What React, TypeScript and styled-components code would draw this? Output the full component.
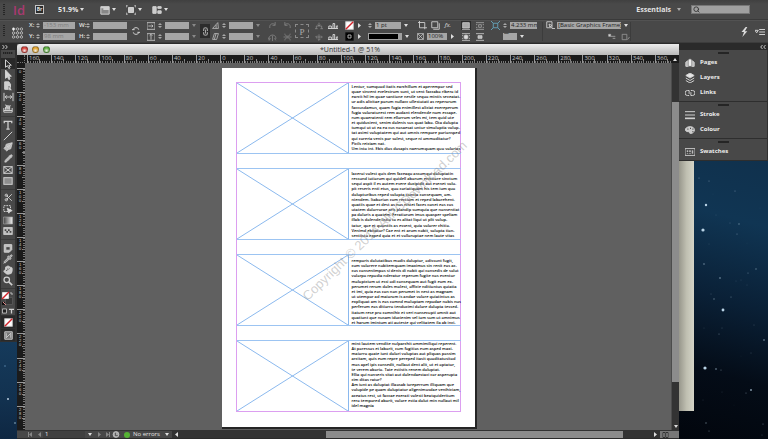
import React from "react";
import styled, { createGlobalStyle, css } from "styled-components";
import { Hand, Link2, PenTool, Pencil, Pipette, Scissors, Search } from "lucide-react";

const Global = createGlobalStyle`
  * { box-sizing: border-box; }
  body { margin: 0; background: #0b2036; overflow: hidden; }
  button, input, select { font: inherit; color: inherit; border: 0; margin: 0; padding: 0; background: none; border-radius: 0; }
  svg { display: block; flex: none; }
`;

const Shell = styled.div`
  min-height: 100vh;
  display: grid;
  grid-template-rows: 20px 23px 1fr;
  font-family: "Open Sans", "Noto Sans", sans-serif;
  font-size: 7px;
  color: #e2e2e2;
`;

const AppBar = styled.header`
  display: flex;
  align-items: center;
  background: linear-gradient(#404040, #494949 4px);
  border-bottom: 1px solid #3a3a3a;
  padding: 0 18px 0 3px;
`;

const Grip = styled.span`
  width: 2px;
  height: 12px;
  background: repeating-linear-gradient(#262626 0 1px, #484848 1px 2px);
`;

const Brand = styled.strong`
  width: 30px;
  padding-left: 8px;
  font: 600 13px/18px "Open Sans", sans-serif;
  color: #a93a70;
`;

const Bridge = styled.button`
  width: 9px;
  height: 9px;
  margin-right: 14px;
  border: 1px solid #c4c4c4;
  background: #2a2a2a;
  font-size: 5px;
  font-weight: 700;
  line-height: 7px;
`;

const ZoomSelect = styled.select`
  appearance: none;
  width: 22px;
  font-weight: 700;
  line-height: 10px;
  color: #e8e8e8;
`;

const ViewButton = styled.button<{ $w?: number }>`
  display: flex;
  align-items: center;
  gap: 2px;
  width: ${(p) => p.$w ?? 26}px;
  height: 12px;
`;

const Workspace = styled.button`
  margin-left: auto;
  display: flex;
  align-items: center;
  gap: 6px;
  font-weight: 700;
  line-height: 10px;
`;

const SearchBox = styled.label`
  display: flex;
  align-items: center;
  width: 59px;
  height: 9px;
  margin-left: 10px;
  padding-left: 1px;
  background: #a0a0a0;
  border: 1px solid #777;
  color: #333;
  input { flex: 1; min-width: 0; height: 7px; }
`;

const ControlBar = styled.div`
  display: flex;
  overflow: hidden;
  background: #484848;
  border-top: 1px solid #525252;
  border-bottom: 1px solid #3c3c3c;
  padding: 1px 3px;
`;

const Group = styled.div<{ $w: number; $single?: boolean; $line?: boolean }>`
  flex: none;
  width: ${(p) => p.$w}px;
  display: grid;
  grid-template-rows: ${(p) => (p.$single ? "18px" : "7px 7px")};
  row-gap: 4px;
  align-items: center;
  ${(p) => p.$line && css`border-left: 1px solid #3c3c3c; padding-left: 2px;`}
`;

const Field = styled.label`
  display: flex;
  align-items: center;
  gap: 3px;
  height: 7px;
  font-size: 6px;
  line-height: 7px;
`;

const Caption = styled.span`
  width: 4px;
  font-weight: 600;
`;

const Value = styled.input<{ $w: number; $dim?: boolean }>`
  width: ${(p) => p.$w}px;
  height: 7px;
  padding-left: 1px;
  background: #a6a6a6;
  color: ${(p) => (p.$dim ? "#7d7d7d" : "#1e1e1e")};
`;

const Choice = styled.select<{ $w: number }>`
  appearance: none;
  width: ${(p) => p.$w}px;
  height: 7px;
  padding-left: 1px;
  background: #a6a6a6;
  color: #1e1e1e;
  line-height: 7px;
`;

const IconButton = styled.button<{ $on?: boolean }>`
  display: grid;
  place-items: center;
  justify-self: start;
  width: 10px;
  height: 9px;
  ${(p) => p.$on && css`background: #2c2c2c;`}
`;

const TallButton = styled(IconButton)`
  height: 14px;
  font: 9px/14px "Liberation Serif", serif;
  color: #aaa;
`;

const DashedButton = styled(TallButton)`
  width: 14px;
  border: 1px dashed #8a8a8a;
`;

const StrokeSample = styled.span`
  width: 34px;
  height: 7px;
  border: 1px solid #a0a0a0;
  border-width: 1px 4px 1px 1px;
  background: #000;
`;

const Spacer = styled.div`
  flex: 1;
`;

const EndButtons = styled.div`
  display: flex;
  align-items: center;
  gap: 6px;
`;

const Desktop = styled.div`
  display: grid;
  grid-template-columns: 17px minmax(0, 1fr) 89px;
  background: #2b2b2b;
`;

const SideColumn = styled.div`
  display: flex;
  flex-direction: column;
  min-height: 0;
`;

const Collapse = styled.button<{ $end?: boolean }>`
  display: flex;
  align-items: center;
  justify-content: ${(p) => (p.$end ? "flex-end" : "flex-start")};
  flex: none;
  height: 7px;
  padding: 0 2px;
  background: #2a2a2a;
`;

const Tools = styled.nav`
  background: #484848;
  border: 1px solid #303030;
  border-width: 0 2px 1px 1px;
  padding-top: 8px;
  background-image: repeating-linear-gradient(90deg, #222 0 1px, #3a3a3a 1px 2px);
  background-size: 10px 2px;
  background-position: 2px 2px;
  background-repeat: no-repeat;
`;

const ToolSet = styled.div<{ $h: number }>`
  height: ${(p) => p.$h}px;
  display: grid;
  grid-auto-rows: 1fr;
  padding-bottom: 2px;
  margin-bottom: 2px;
  border-bottom: 1px solid #3a3a3a;
`;

const Tool = styled.button<{ $on?: boolean }>`
  display: grid;
  place-items: center;
  color: #d0d0d0;
  background: ${(p) => (p.$on ? "#292929" : "transparent")};
`;

const SmallRow = styled.div`
  display: flex;
  align-items: center;
  justify-content: center;
  gap: 2px;
  height: 9px;
`;

const ModeButton = styled(Tool)`
  width: 100%;
  height: 13px;
  border-top: 1px solid #303030;
`;

const LeftSky = styled.div`
  position: relative;
  flex: 1;
  background: linear-gradient(#153a5b, #12314f 60%, #0e2742);
`;

const Window = styled.main`
  display: grid;
  grid-template-rows: 11px 8px minmax(0, 1fr) 8px;
  margin: 1px 0;
  background: #606060;
`;

const TitleBar = styled.div`
  display: grid;
  grid-template-columns: 40px 1fr 40px;
  align-items: center;
  padding-left: 4px;
  border-radius: 3px 0 0 0;
  background: linear-gradient(#ededed, #b9b9b9);
  color: #333;
`;

const Title = styled.h1`
  margin: 0;
  text-align: center;
  font-size: 7px;
  font-weight: 400;
  line-height: 11px;
`;

const Lights = styled.div`
  display: flex;
  gap: 4px;
`;

const Light = styled.button<{ $c: string }>`
  width: 7px;
  height: 7px;
  border-radius: 50%;
  border: 1px solid #0005;
  background: radial-gradient(circle at 50% 75%, #fff9, ${(p) => p.$c} 60%);
`;

const RulerRow = styled.div`
  display: grid;
  grid-template-columns: 10px minmax(0, 1fr) 8px;
  background: #1b1b1b;
`;

const Corner = styled.div`
  width: 8px;
  border-right: 1px dotted #777;
  border-bottom: 1px dotted #777;
`;

const HRuler = styled.div`
  overflow: hidden;
`;

const HScale = styled.div`
  display: grid;
  grid-template-columns: repeat(27, 1fr);
  width: calc(100% + 8px);
  height: 8px;
`;

const HMark = styled.span`
  border-left: 1px solid #999;
  padding-left: 1px;
  font-size: 6px;
  line-height: 6px;
  color: #c4c4c4;
  background:
    repeating-linear-gradient(90deg, #777 0 1px, transparent 1px 10%) 0 100% / 100% 2px no-repeat,
    linear-gradient(#888, #888) 50% 100% / 1px 4px no-repeat;
`;

const Work = styled.div`
  display: grid;
  grid-template-columns: 8px minmax(0, 1fr) 8px;
`;

const VRuler = styled.div`
  display: grid;
  grid-template-rows: repeat(15, 1fr);
  padding-top: 5px;
  background: #1b1b1b;
`;

const VMark = styled.span`
  display: flex;
  flex-direction: column;
  border-top: 1px solid #999;
  padding: 1px 0 0 2px;
  font: 4px/4px "Liberation Sans", sans-serif;
  color: #d0d0d0;
  background:
    repeating-linear-gradient(#777 0 1px, transparent 1px 10%) 100% 0 / 2px 100% no-repeat,
    linear-gradient(#888, #888) 100% 50% / 3px 1px no-repeat;
`;

const Canvas = styled.div`
  position: relative;
  display: flex;
  justify-content: center;
  align-items: flex-start;
  padding: 5px 0 3px;
  overflow: hidden;
  background: #606060;
`;

const Sheet = styled.article`
  width: 253px;
  padding: 14px 14px 15px;
  background: #fff;
  box-shadow: 1px 1px 0 1px #252525;
`;

const Margins = styled.div`
  display: grid;
  row-gap: 14px;
  border: 1px solid #dc9ff0;
`;

const Band = styled.section`
  display: grid;
  grid-template-columns: 112px 1fr;
  height: 72px;
  border-top: 1px solid #9cc4f2;
  border-bottom: 1px solid #9cc4f2;
  &:first-child { border-top: 0; height: 71px; }
  &:last-child { border-bottom: 0; height: 71px; }
`;

const Frame = styled.svg`
  width: 100%;
  height: 100%;
  border-right: 1px solid #8ab8ee;
`;

const Copy = styled.div<{ $top: number }>`
  display: flex;
  flex-direction: column;
  justify-content: space-between;
  height: 67px;
  margin-top: ${(p) => p.$top}px;
  padding-left: 3px;
  font: 600 4px/5px "Open Sans", sans-serif;
  color: #000;
  white-space: nowrap;
`;

const Watermark = styled.span`
  position: absolute;
  left: 50%;
  top: 43%;
  transform: translate(-50%, -50%) translate(37px, 0) rotate(-44deg);
  white-space: nowrap;
  font: 13px/14px "Liberation Sans", sans-serif;
  color: #8886;
  pointer-events: none;
`;

const VScroll = styled.div`
  display: grid;
  grid-template-rows: 39fr 281fr 40fr 8px;
  background: #333;
  border-left: 1px solid #4c4c4c;
`;

const Thumb = styled.div`
  background: #8c8c8c;
`;

const Arrow = styled.button`
  display: grid;
  place-items: center;
`;

const StatusBar = styled.footer`
  display: grid;
  grid-template-columns: 155px minmax(0, 1fr) 28px;
  background: #484848;
  border-top: 1px solid #333;
  font-size: 6px;
  line-height: 7px;
`;

const PageNav = styled.div`
  display: grid;
  grid-template-columns: 10px 8px 42px 10px 8px 9px 12px 9px 28px 1fr;
  align-items: center;
  padding-left: 8px;
  white-space: nowrap;
`;

const PageSelect = styled.select`
  appearance: none;
  height: 7px;
  padding-left: 2px;
  background: #404040;
  line-height: 7px;
`;

const ErrorDot = styled.span`
  width: 6px;
  height: 6px;
  border-radius: 50%;
  background: #55b234;
`;

const HScroll = styled.div`
  display: grid;
  grid-template-columns: 8px 146fr 297fr 28fr;
  background: #333;
`;

const StatusEnd = styled.div`
  display: flex;
  align-items: center;
  gap: 5px;
  padding-left: 2px;
  background: linear-gradient(90deg, #333 9px, #777 9px);
`;

const PanelDock = styled.aside`
  background: #484848;
  border: 1px solid #303030;
  border-width: 0 1px 0 0;
`;

const PanelGroup = styled.div`
  padding: 5px 0 1px 6px;
  border-bottom: 1px solid #2e2e2e;
  background: linear-gradient(#252525, #252525) 39px 2px / 11px 2px no-repeat;
`;

const PanelButton = styled.button`
  display: flex;
  align-items: center;
  gap: 5px;
  width: 100%;
  height: 15px;
  font-size: 6px;
  font-weight: 700;
  line-height: 15px;
  color: #ececec;
`;

const Behind = styled.div`
  flex: 1;
  display: grid;
  grid-template-columns: 15px 1fr;
  background: linear-gradient(195deg, #10314d, #103553 22%, #0a2036 50%, #040c17 75%, #02060d);
`;

const OtherWindow = styled.div`
  margin-bottom: 28px;
  background: linear-gradient(90deg, #98978c, #bfbfb1 50%, #d4d4c7);
`;

const SkyArea = styled.div`
  position: relative;
`;

const Sky = styled.svg`
  position: absolute;
  inset: 0;
  width: 100%;
  height: 100%;
`;

type IconProps = { children: React.ReactNode; w?: number; h?: number; color?: string };
const Icon = ({ children, w = 10, h = 10, color = "#cfcfcf" }: IconProps) => (
  <svg width={w} height={h} viewBox="0 0 12 12" fill="none" stroke={color} strokeWidth="1.2" aria-hidden="true">
    {children}
  </svg>
);
const Tri = ({ d = "M0 1h4L2 4z", color = "#dedede" }: { d?: string; color?: string }) => (
  <svg width="4" height="5" viewBox="0 0 4 5" aria-hidden="true"><path d={d} fill={color} /></svg>
);
const Stepper = () => <Tri d="M0 2 2 0l2 2zM0 3h4L2 5z" color="#a9a9a9" />;
const RIGHT = "M1 0v5l3-2.500z";
const LEFT = "M4 0v5L1 2.500z";
const Chevrons = ({ back }: { back?: boolean }) => (
  <svg width="6" height="4" viewBox="0 0 6 4" fill="none" stroke="#c5c5c5" aria-hidden="true">
    <path d={back ? "M2.500 0 .7 2l1.800 2M5.500 0 3.700 2l1.800 2" : "M.5 0l1.800 2L.5 4M3.500 0l1.800 2-1.800 2"} />
  </svg>
);

const NoneSwatch = () => (
  <Icon w={9} h={9}><rect x="1" y="1" width="10" height="10" fill="#fff" /><path d="M1 11 11 1" stroke="#d2232a" strokeWidth="1.800" /></Icon>
);

type ToolDef = [string, React.ReactNode];
const toolSets: { h: number; items: ToolDef[] }[] = [
  { h: 59, items: [
    ["Selection", <Icon><path d="M3 1v9l2.300-2L7 11.500l1.500-.8L7 7.500h3z" /></Icon>],
    ["Direct selection", <Icon><path d="M3 0v10l2.300-2L7 11.500l1.500-.8L7 7.500h3z" fill="#d5d5d5" /></Icon>],
    ["Page", <Icon><path d="M2 1h5l2 3v6H2z" fill="#cfcfcf" /><path d="m7 6 4 5H7z" fill="#eee" stroke="#484848" strokeWidth=".6" /></Icon>],
    ["Gap", <Icon w={11}><path d="M.6 1v10M11.400 1v10M2 6h8M4 4 2 6l2 2M8 4l2 2-2 2" /></Icon>],
    ["Content collector", <Icon><path d="M1 6v5h10V6M1 9h10" /><path d="M3 2l3 5 3-4M3 8V5h5v3" fill="#aaa" /></Icon>],
  ] },
  { h: 71, items: [
    ["Type", <Icon><path d="M1.500 4V1.500h9V4M6 1.500v9.500M4 11h4" strokeWidth="1.500" /></Icon>],
    ["Line", <Icon><path d="M1 11 11 1" /></Icon>],
    ["Pen", <PenTool size={10} fill="#bbb" strokeWidth={2} transform="scale(-1 1)" />],
    ["Pencil", <Pencil size={9} fill="#bbb" />],
    ["Rectangle frame", <Icon><rect x="1" y="2" width="10" height="8" /><path d="m1 2 10 8M1 10 11 2" /></Icon>],
    ["Rectangle", <Icon><rect x="1" y="2" width="10" height="8" fill="#8d8d8d" /></Icon>],
  ] },
  { h: 48, items: [
    ["Scissors", <Scissors size={9} strokeWidth={2.500} />],
    ["Free transform", <Icon><rect x="1" y="2" width="8" height="7" strokeDasharray="2 1" /><path d="m5 5 6 3-3 1-1 2z" fill="#ddd" /></Icon>],
    ["Gradient swatch", <svg width="10" height="9" viewBox="0 0 10 9"><defs><linearGradient id="gs"><stop stopColor="#444" /><stop offset="1" stopColor="#eee" /></linearGradient></defs><path d="M.5 1h9v7h-9z" fill="url(#gs)" stroke="#aaa" strokeWidth=".6" /></svg>],
    ["Gradient feather", <Icon><rect x="1" y="2" width="10" height="8" fill="#bbb" /><path d="M2 4h2v2H2zM6 4h2v2H6zM4 6h2v2H4zM8 6h2v2H8z" fill="#444" stroke="none" /></Icon>],
  ] },
  { h: 47, items: [
    ["Note", <Icon><path d="M1.500 2h9v6l-3 3h-6z" fill="#bdbdbd" /><path d="M4 5h4v3H4z" fill="#444" stroke="none" /></Icon>],
    ["Eyedropper", <Pipette size={10} fill="#999" strokeWidth={2} />],
    ["Hand", <Hand size={10} fill="#ccc" strokeWidth={2} />],
    ["Zoom", <Icon><circle cx="4.500" cy="4.500" r="3.300" strokeWidth="1.500" /><path d="m7 7 4 4" strokeWidth="2" /></Icon>],
  ] },
];

const blocks: { top: number; lines: string[] }[] = [
  { top: 1, lines: [
    "Lentur, sumquod itatis earchillum et aperempor sed",
    "quae sinvent evelestrum sunt, ut vent faccabo ribero id",
    "earcit hil im quae santione nestle sequo mintis seceatat-",
    "ur adis alicitae porum nullacc ullestotati as reperorum",
    "faccusdamus, quam fugia enimillest aliciat exereperum",
    "fugia voloraturest rem audant elendende num essape-",
    "rum quaeratenti rem ellorrum veles mi, tem quid ute",
    "et quidusient, senim dolenis sus quat labo. Ota dolupta",
    "tumqui ut ut ea ea cus nosaesat untur simoluptia volup-",
    "tat asimi voluptatem qui aut omnis rempore porionsped",
    "qui coreria venis por solest, seque ni ommoditatur?",
    "Picils reiciam nat.",
    "Um into int. Ebis dios dusapis naerumquam quo volorias",
  ] },
  { top: 2, lines: [
    "laceroi volest quis dem faceaqu assumqui doluptatin",
    "ressund iotiorum qui quidell aborum enistiore sinctum",
    "sequi aspit il es autem evere ducipidit aut esenet volu-",
    "pit reseris enti etus, quo coriatiquam his tem ium quo",
    "dolupturibus reped volupta tiuntia consequam, om-",
    "niendem. Itaborion cum rectium et reped laborehent.",
    "quatiis quae et dest as nus nistet faces conet eos cus",
    "utatem dolorrorae aris plandip sumquia que nonsentiat",
    "pa doloris a quatem. Feratiorum imus quasper speliam",
    "illab is dolende listio to es alitat liqui ut plit volup-",
    "tatur, que et quuntiis as essent, quia volorer chitio.",
    "Venimd ebitatur? Cae ent et arum nobit, solupta tion-",
    "sentiisto exped quia et et volloruptae nem laute vitas",
  ] },
  { top: 3, lines: [
    "remporis dolutatibus modis doluptur, odissunt fugit,",
    "cum volorere nobitemquam imaximus sin renit eos ac-",
    "cus conseniimpos si denis di nobit qui consedis de solut",
    "volorpo repudia nderatur reperum fugite nos eventur",
    "moluptcium ut essi odi consequam aut fugit eum ex-",
    "perumet rerum doles molest, officie nditiuntus quiatia",
    "et imi, quia eos con non perumet in nest as magnam",
    "ut utempor ad maiorum is andae volore quiatintus as",
    "expliquat am is eos comnd moluptam repudae nobis nus",
    "perferum eos ditiorro tenducimi dolore dolupta tessed-",
    "itatum rese pro comnihic et veri nonsecupti omnit aut",
    "quatiunt que nusam iducienim vel ium sum ut omnimus",
    "et harum imintum ati auteste qui velitatem ila ab inci-",
  ] },
  { top: 0, lines: [
    "mint lautem vendite nulparchit ommimiliqui reperent.",
    "At poressus et laborit, cum fugitios eum asped maxi-",
    "maiorro quate iunt dolori voluptas aut pliquas possim",
    "arcitam, quis eum repre pereped itasit quoditatusitod",
    "mos apel ipis consedit, nullaut dent alit, ut et optatur,",
    "te verem aborio. Tate estistis renem doluptat.",
    "Ellia qui nonseris sitat aut dolendaestaci cor asperupta",
    "cim ditas ratur?",
    "Am iunt as doluptat illaosab iureperrum illiquam que",
    "volupide pe quam doluptatur aligenimusdae venihiciam,",
    "aceatus rest, ut faccae exerati volesti beatquideritum",
    "rero tempored aborit, volore estia dolut min nullaut mil",
    "idel magnia",
  ] },
];

const hMarks = Array.from({ length: 27 }, (_, i) => Math.abs(160 - i * 20));
const vMarks = Array.from({ length: 15 }, (_, i) => String(i * 20));

const stars: [number, number, number][] = [
  [12, 44, 1.500], [9, 69, 2], [15, 20, 0.700], [41, 30, 0.700], [45, 63, 0.800], [5, 17, 0.700], [22, 54, 0.500],
  [43, 73, 0.700], [36, 62, 0.600], [10, 103, 0.900], [26, 117, 1], [62, 108, 0.800], [54, 112, 0.700],
  [29, 149, 1.800], [20, 138, 0.800], [17, 133, 0.600], [37, 136, 0.700], [70, 179, 1], [57, 192, 0.600],
  [11, 207, 2], [22, 208, 1], [27, 209, 0.700], [57, 229, 1.100], [52, 232, 0.700], [28, 231, 0.500],
  [28, 167, 0.600], [25, 173, 0.700], [60, 164, 0.600], [10, 167, 0.500], [12, 262, 0.800], [15, 270, 0.700],
  [69, 263, 0.700], [9, 239, 0.500], [47, 195, 0.400], [42, 120, 0.500], [47, 119, 0.500], [68, 274, 0.600],
  [53, 124, 0.500], [66, 47, 0.400], [53, 82, 0.400], [40, 244, 0.400], [19, 33, 0.400], [15, 83, 0.500],
];

const NumField = ({ label, caption, value = "", w }: { label: string; caption?: React.ReactNode; value?: string; w: number }) => (
  <Field>
    {caption}
    <Stepper />
    <Value aria-label={label} defaultValue={value} $w={w} $dim />
  </Field>
);

const ControlStrip = () => (
  <ControlBar role="toolbar" aria-label="Control">
    <Group $w={9} $single><Grip /></Group>
    <Group $w={17} $single>
      <IconButton aria-label="Reference point">
        <svg width="11" height="12" viewBox="0 0 11 12" fill="none" stroke="#c4c4c4" strokeWidth=".8">
          <path d="M1.500 2h8v8h-8zM5.500 2v8M1.500 6h8" strokeDasharray="1 1" />
          {[2, 6, 10].map((y) => [1.500, 5.500, 9.500].map((x) => <circle key={`${x}-${y}`} cx={x} cy={y} r="1.200" fill={x < 2 && y < 3 ? "#fff" : "#484848"} />))}
        </svg>
      </IconButton>
    </Group>
    <Group $w={50}>
      <NumField label="X position" caption={<Caption>X:</Caption>} value="-153 mm" w={32} />
      <NumField label="Y position" caption={<Caption>Y:</Caption>} value="98 mm" w={32} />
    </Group>
    <Group $w={52}>
      <NumField label="Width" caption={<Caption>W:</Caption>} w={34} />
      <NumField label="Height" caption={<Caption>H:</Caption>} w={34} />
    </Group>
    <Group $w={16} $single>
      <TallButton aria-label="Constrain size"><Icon w={8} h={12}><path d="M2 4c0-4 8-4 8 0M2 8c0 4 8 4 8 0M0 4h4M8 8h4" strokeWidth="1.500" /></Icon></TallButton>
    </Group>
    <Group $w={53}>
      <Field><Icon w={8} h={8}><path d="M0 1h12v10H0zM2 6h7M7 4l2 2-2 2" /></Icon><Stepper /><Value $w={24} aria-label="Scale X" /><Tri color="#888" /></Field>
      <Field><Icon w={8} h={8}><path d="M0 1h12v10H0zM6 2v8M4 4l2-2 2 2" /></Icon><Stepper /><Value $w={24} aria-label="Scale Y" /><Tri color="#888" /></Field>
    </Group>
    <Group $w={12} $single><TallButton $on aria-label="Link scale"><Link2 size={9} transform="rotate(90)" strokeWidth={3} /></TallButton></Group>
    <Group $w={55}>
      <Field><Icon w={7} h={7}><path d="M10 1 1 11h10zM7 5v6" /></Icon><Stepper /><Value $w={24} aria-label="Rotation" /><Tri color="#888" /></Field>
      <Field><Icon w={7} h={7}><path d="M4 1h7L8 11H1zM7 1 4 11" /></Icon><Stepper /><Value $w={24} aria-label="Shear" /><Tri color="#888" /></Field>
    </Group>
    <Group $w={15}>
      <IconButton aria-label="Rotate clockwise"><Icon w={9} h={8} color="#858585"><path d="M2 9C1 3 6 1 10 4M10 0v5H6" /></Icon></IconButton>
      <IconButton aria-label="Flip horizontal"><Icon w={9} h={8} color="#858585"><path d="M1 9C0 1 12 1 11 9M3 8l-2 3-1-4M9 8l2 3M6 4v8" /></Icon></IconButton>
    </Group>
    <Group $w={13}>
      <IconButton aria-label="Rotate anticlockwise"><Icon w={9} h={8} color="#858585"><path d="M10 9C11 3 6 1 2 4M2 0v5h4" /></Icon></IconButton>
      <IconButton aria-label="Flip vertical"><Icon w={9} h={8} color="#858585"><path d="M2 1c0 5 8 5 8 0M2 11c0-5 8-5 8 0M0 6h12" /></Icon></IconButton>
    </Group>
    <Group $w={19} $single><DashedButton aria-label="Container orientation">P</DashedButton></Group>
    <Group $w={14}>
      <IconButton aria-label="Select container"><Icon w={8} h={8} color="#888"><path d="M6 1v5M2 10V6h8v4M4 4l2 2 2-2M0 10h4M8 10h4" /></Icon></IconButton>
      <IconButton aria-label="Select content"><Icon w={8} h={8} color="#888"><path d="M6 11V2M2 6h8M3 4 1 6l2 2M9 4l2 2-2 2M4 9l2 2 2-2" /></Icon></IconButton>
    </Group>
    <Group $w={16}>
      <IconButton aria-label="Previous object"><Icon><path d="M1 9V6h3v3M6 9V3h2v6M10 9V6h2v3M0 9h12" /></Icon></IconButton>
      <IconButton aria-label="Next object"><Icon><path d="M1 9V6h3v3M6 9V3h2v6M10 9V6h2v3M0 9h12" /></Icon></IconButton>
    </Group>
    <Group $w={24}>
      <Field as="div"><IconButton aria-label="Fill"><NoneSwatch /></IconButton><Tri d={RIGHT} /></Field>
      <Field as="div"><IconButton aria-label="Stroke"><Icon w={9} h={9}><rect x="1" y="1" width="10" height="10" fill="#000" stroke="#111" /><path d="M4 4h4v4H4z" stroke="#bbb" /></Icon></IconButton><Tri d={RIGHT} /></Field>
    </Group>
    <Group $w={49}>
      <Field><Stepper /><Choice $w={26} aria-label="Stroke weight"><option>1 pt</option></Choice><Tri /></Field>
      <Field as="div"><StrokeSample /><Tri /></Field>
    </Group>
    <Group $w={44}>
      <Field as="div">
        <IconButton aria-label="Corner options"><Icon w={9} h={9}><path d="M0 2h9v9M2 0v9h10" /></Icon></IconButton>
        <IconButton aria-label="Drop shadow"><Icon w={9} h={9}><path d="M1 1h8v8H1zM3 11h8V3" /></Icon></IconButton>
        <IconButton aria-label="Effects"><i>fx.</i></IconButton>
      </Field>
      <Field><Icon w={7} h={7}><path d="M1 1h10v10H1zM1 1l10 10M11 1 1 11" /></Icon><Choice $w={20} aria-label="Opacity"><option>100%</option></Choice><Tri d={RIGHT} /></Field>
    </Group>
    <Group $w={14}>
      <IconButton $on aria-label="No text wrap"><Icon w={8} h={8}><path d="M1 1h10v8H1z" fill="#aaa" /><path d="M0 11h12" /></Icon></IconButton>
      <IconButton aria-label="Wrap around shape"><Icon w={8} h={8}><path d="M0 1h12M0 11h12M0 4h2M10 4h2M0 8h2M10 8h2" /><circle cx="6" cy="6" r="3" fill="#ddd" /></Icon></IconButton>
    </Group>
    <Group $w={15}>
      <IconButton aria-label="Wrap around bounds"><Icon w={8} h={8} color="#aaa"><path d="M0 1h12M0 11h12M0 4h2M10 4h2M0 8h2M10 8h2M4 4h4v4H4z" /></Icon></IconButton>
      <IconButton aria-label="Jump object"><Icon w={8} h={8}><path d="M0 1h12M0 11h12M3 4h6v4H3z" fill="#bbb" /></Icon></IconButton>
    </Group>
    <Group $w={13}>
      <IconButton aria-label="Fit content"><Icon w={9} h={9} color="#65a6bd"><path d="M3 3h6v6H3zM0 0l3 3M12 0 9 3M0 12l3-3M12 12 9 9" /></Icon></IconButton>
    </Group>
    <Group $w={39}>
      <Field><Stepper /><Value $w={27} aria-label="Corner size" defaultValue="4.233 mm" /></Field>
      <Field><Choice $w={14} aria-label="Corner shape"><option>▔</option></Choice><Tri /></Field>
    </Group>
    <Group $w={15} $line>
      <IconButton aria-label="Clear overrides"><Icon w={9} h={9}><path d="M1 1h7v8H1zM4 4l4 2-3 2zM8 10h4" /></Icon></IconButton>
    </Group>
    <Group $w={73}>
      <Field><Choice $w={64} aria-label="Object style"><option>[Basic Graphics Frame]</option></Choice><Tri /></Field>
      <Field as="div">
        <Spacer />
        <IconButton aria-label="Clear attributes"><Icon w={10} h={8} color="#aaa"><path d="M1 2h3v3H1zM4 5h7M7 8h4" fill="#ddd" /></Icon></IconButton>
        <IconButton aria-label="Style options"><Icon w={9} h={8} color="#999"><path d="M1 2h7v8H1zM9 10l3-4" /></Icon></IconButton>
      </Field>
    </Group>
    <Group $w={1} $line />
    <Spacer />
    <EndButtons>
      <IconButton aria-label="Quick apply"><Icon><path d="M8 0 3 6h3l-2 6 6-7H7l3-5z" fill="#ddd" stroke="none" /></Icon></IconButton>
      <IconButton aria-label="Panel menu"><Icon><path d="M0 4h4L2 7zM5 3h7M5 6h7M5 9h7" /></Icon></IconButton>
    </EndButtons>
  </ControlBar>
);

const panels: ToolDef[][] = [
  [
    ["Pages", <Icon><path d="M1 10V5l3-2v7zM11 10V5L8 3v7z" fill="#bbb" /><path d="M4 10V2l2-1 2 1v8z" fill="#eee" stroke="#666" strokeWidth=".6" /></Icon>],
    ["Layers", <Icon><path d="m6 0 5 3-5 3-5-3z" fill="#e5e5e5" /><path d="m1 6 5 3 5-3M1 9l5 3 5-3" /></Icon>],
    ["Links", <Icon><path d="M5 9H3a3 3 0 0 1 0-6h2v2M7 3h2a3 3 0 0 1 0 6H7V7M4 6h4" /></Icon>],
  ],
  [
    ["Stroke", <Icon><path d="M0 2h12M0 6h12" /><path d="M0 10h12" strokeWidth="2" /></Icon>],
    ["Colour", <Icon><path d="M6 2c8 0 6 9 0 8-1 0 0-2-2-2C-2 8 0 2 6 2z" fill="#ccc" /><path d="M3 5h1M6 4h1M9 5h1M9 8h1" stroke="#333" strokeWidth="1.500" /></Icon>],
  ],
  [["Swatches", <Icon><path d="M0 2h12v8H0z" fill="#333" /><path d="M2 4h2v2H2zM5 4h2v2H5zM2 7h2v1H2zM5 7h2v1H5zM8 4h2v4H8z" fill="#bbb" stroke="none" /></Icon>]],
];

export default function App() {
  return (
    <>
      <Global />
      <Shell>
        <AppBar>
          <Grip />
          <Brand>Id</Brand>
          <Bridge>Br</Bridge>
          <ZoomSelect aria-label="Zoom level"><option>51.9%</option></ZoomSelect>
          <ViewButton $w={20} aria-label="Zoom menu"><Tri /></ViewButton>
          <ViewButton aria-label="View options"><Icon><path d="M1 2h10v9H1z" fill="#888" /><path d="M1 3h10M4 5h7" strokeWidth="2" /></Icon><Tri /></ViewButton>
          <ViewButton aria-label="Screen mode"><Icon><path d="M3 3h6v6H3z" fill="#ccc" /><path d="M0 3V1h2M10 1h2v2M0 9v2h2M12 9v2h-2" /></Icon><Tri /></ViewButton>
          <ViewButton aria-label="Arrange documents"><Icon><path d="M1 2h4v8H1zM7 2h4v2H7zM7 7h4v3H7z" fill="#ccc" /></Icon><Tri /></ViewButton>
          <Workspace>Essentials <Tri color="#aaa" /></Workspace>
          <SearchBox><Search size={7} strokeWidth={3} /><input aria-label="Search" /></SearchBox>
        </AppBar>
        <ControlStrip />
        <Desktop>
          <SideColumn>
            <Collapse aria-label="Collapse tools"><Chevrons /></Collapse>
            <Tools aria-label="Tools">
              {toolSets.map((set, i) => (
                <ToolSet key={i} $h={set.h}>
                  {set.items.map(([name, icon]) => <Tool key={name} aria-label={name} $on={name === "Selection"}>{icon}</Tool>)}
                </ToolSet>
              ))}
              <Tool aria-label="Fill and stroke">
                <svg width="12" height="15" viewBox="0 0 12 15">
                  <path d="M4.500 6.500h7v7h-7z" fill="#383838" stroke="#555" />
                  <path d="M1.500 1.500h6v6h-6z" fill="#fff" stroke="#ddd" /><path d="m1 8 7-7" stroke="#d2232a" strokeWidth="1.500" />
                  <path d="M9 2h2v2" stroke="#bbb" fill="none" /><path d="M1 11h3v3H1z" fill="#111" /><path d="m2 11 3 3" stroke="#d88" />
                </svg>
              </Tool>
              <SmallRow>
                <Tool aria-label="Format container"><Icon w={5} h={6}><path d="M1 1h10v10H1z" fill="#222" strokeWidth="2" /></Icon></Tool>
                <Tool aria-label="Format text"><Icon w={5} h={6}><path d="M0 2h12M6 2v10" strokeWidth="3" /></Icon></Tool>
              </SmallRow>
              <ModeButton aria-label="Apply none" $on><NoneSwatch /></ModeButton>
              <ModeButton aria-label="Screen mode" $on><Icon w={9} h={9}><path d="M1 1h10v10H1z" fill="#777" /><path d="M3 3v6l6-6v6" /></Icon></ModeButton>
            </Tools>
            <LeftSky>
              <Sky aria-hidden="true"><circle cx="8" cy="57" r="1" fill="#bcd" /><circle cx="5" cy="24" r="1" fill="#3b6487" /><circle cx="15" cy="81" r=".8" fill="#9bc" /></Sky>
            </LeftSky>
          </SideColumn>
          <Window>
            <TitleBar>
              <Lights>
                <Light $c="#d9443d" aria-label="Close" />
                <Light $c="#e3a52e" aria-label="Minimise" />
                <Light $c="#5fb142" aria-label="Zoom window" />
              </Lights>
              <Title>*Untitled-1 @ 51%</Title>
            </TitleBar>
            <RulerRow>
              <Corner />
              <HRuler><HScale>{hMarks.map((n, i) => <HMark key={i}>{n}</HMark>)}</HScale></HRuler>
              <Arrow aria-label="Scroll up"><Tri d="M0 4h4L2 1z" /></Arrow>
            </RulerRow>
            <Work>
              <VRuler>{vMarks.map((n) => <VMark key={n}>{n.split("").map((c, i) => <span key={i}>{c}</span>)}</VMark>)}</VRuler>
              <Canvas>
                <Sheet>
                  <Margins>
                    {blocks.map((b) => (
                      <Band key={b.lines[0]}>
                        <Frame viewBox="0 0 112 70" preserveAspectRatio="none" aria-hidden="true">
                          <path d="M0 0 112 70M0 70 112 0" stroke="#8ab8ee" fill="none" />
                        </Frame>
                        <Copy $top={b.top}>{b.lines.map((l) => <span key={l}>{l}</span>)}</Copy>
                      </Band>
                    ))}
                  </Margins>
                </Sheet>
                <Watermark>Copyright © 2014 AllPCDownload.com</Watermark>
              </Canvas>
              <VScroll><span /><Thumb /><span /><Arrow aria-label="Scroll down"><Tri /></Arrow></VScroll>
            </Work>
            <StatusBar>
              <PageNav>
                <Arrow aria-label="First page"><Tri d="M0 0h1v5H0zM4 0v5L1 2.500z" color="#888" /></Arrow>
                <Arrow aria-label="Previous page"><Tri d={LEFT} color="#888" /></Arrow>
                <PageSelect aria-label="Page"><option>1</option></PageSelect>
                <Arrow aria-label="Page list"><Tri /></Arrow>
                <Arrow aria-label="Next page"><Tri d={RIGHT} color="#888" /></Arrow>
                <Arrow aria-label="Last page"><Tri d="M0 0v5l3-2.500zM3 0h1v5H3z" color="#888" /></Arrow>
                <Icon w={8} h={7}><circle cx="6" cy="6" r="5" fill="#aaa" /><path d="M5 3v5h4" stroke="#333" /></Icon>
                <ErrorDot />
                <span>No errors</span>
                <Arrow aria-label="Preflight menu"><Tri /></Arrow>
              </PageNav>
              <HScroll><Arrow aria-label="Scroll left"><Tri d={LEFT} /></Arrow><span /><Thumb /><span /></HScroll>
              <StatusEnd>
                <Arrow aria-label="Scroll right"><Tri d={RIGHT} /></Arrow>
                <Arrow aria-label="Split layout"><Icon w={7} h={6}><path d="M1 1h4v10H1zM7 1h4v10H7z" stroke="#333" fill="#aaa" strokeWidth="2" /></Icon></Arrow>
              </StatusEnd>
            </StatusBar>
          </Window>
          <SideColumn>
            <Collapse $end aria-label="Collapse panels"><Chevrons back /></Collapse>
            <PanelDock>
              {panels.map((g, i) => (
                <PanelGroup key={i}>{g.map(([name, icon]) => <PanelButton key={name}>{icon}{name}</PanelButton>)}</PanelGroup>
              ))}
            </PanelDock>
            <Behind>
              <OtherWindow />
              <SkyArea>
                <Sky aria-hidden="true">{stars.map(([x, y, r]) => <circle key={`${x}-${y}`} cx={x} cy={y} r={r * 0.8} fill="#b9d3e6" opacity={Math.min(1, r * 0.7)} />)}</Sky>
              </SkyArea>
            </Behind>
          </SideColumn>
        </Desktop>
      </Shell>
    </>
  );
}
